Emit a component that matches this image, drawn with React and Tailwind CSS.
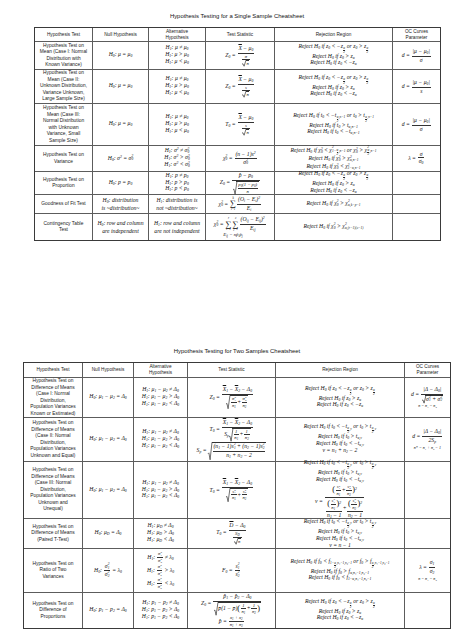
import React from "react";

const Sb = ({ children }) => (
  <span className="align-[-0.3em] text-[0.66em] leading-none">{children}</span>
);
const Sp = ({ children }) => (
  <span className="align-[0.55em] text-[0.66em] leading-none">{children}</span>
);
const SS = ({ sup, sub, t }) => (
  <span
    className={
      (t ? "leading-[0.85] " : "leading-[0.98] ") +
      "inline-flex flex-col items-start align-middle text-[0.62em] ml-[0.2px]"
    }
  >
    <span>{sup}</span>
    <span className="whitespace-nowrap">{sub}</span>
  </span>
);
const Q = () => (
  <span className="inline-flex flex-col items-center align-[0.15em] leading-[0.86] mx-[0.3px]">
    <span>α</span>
    <span className="self-stretch text-center border-t border-[#333]">2</span>
  </span>
);
const Sf = ({ children }) => (
  <span className="text-[0.6em] align-[-0.45em] leading-none whitespace-nowrap">{children}</span>
);
function F({ n, d, sm, c = "" }) {
  return (
    <span
      className={
        (sm ? "text-[0.82em] " : "") +
        "inline-flex flex-col items-center align-middle mx-[0.6px] leading-[1.12] " +
        c
      }
    >
      <span className="px-[0.8px] whitespace-nowrap">{n}</span>
      <span className="self-stretch text-center border-t border-[#333] px-[0.8px] whitespace-nowrap">
        {d}
      </span>
    </span>
  );
}
const R = ({ children }) => (
  <span className="relative inline-flex items-center align-middle pl-[3.6px]">
    <svg
      className="absolute left-0 top-0 h-full w-[4px] overflow-visible"
      viewBox="0 0 4 10"
      preserveAspectRatio="none"
    >
      <path
        d="M0 6.6 L0.9 6.1 L2.1 10 L4 0.1"
        fill="none"
        stroke="#333"
        strokeWidth="0.7"
        vectorEffect="non-scaling-stroke"
      />
    </svg>
    <span className="border-t border-[#333] px-[0.5px] whitespace-nowrap">{children}</span>
  </span>
);
const Sum = ({ top, bot }) => (
  <span className="inline-flex flex-col items-center align-middle leading-[1] mx-[0.5px]">
    <span className="text-[0.55em]">{top}</span>
    <span className="text-[1.5em] not-italic leading-[0.9]">∑</span>
    <span className="text-[0.55em]">{bot}</span>
  </span>
);
const P = ({ children }) => (
  <span className="text-[1.45em] leading-none not-italic align-middle">{children}</span>
);
const L = ({ items, c = "" }) => (
  <div className={"flex flex-col items-center " + c}>
    {items.map((x, i) => (
      <div key={i} className="whitespace-nowrap">
        {x}
      </div>
    ))}
  </div>
);

const Hd = ({ children }) => (
  <div className="bg-white flex flex-col items-center justify-center text-center overflow-hidden [font-family:'Liberation_Sans',Arial,sans-serif] text-[4.7px] leading-[5.9px] text-[#222]">
    <div>{children}</div>
  </div>
);
const Tx = ({ children }) => (
  <div className="bg-white flex flex-col items-center justify-center text-center overflow-hidden [font-family:'Liberation_Sans',Arial,sans-serif] text-[4.85px] leading-[6.5px] text-[#222]">
    <div>{children}</div>
  </div>
);
const Mx = ({ children, c = "" }) => (
  <div
    className={
      "bg-white flex flex-col items-center justify-center text-center [font-family:'Liberation_Serif','DejaVu_Serif',serif] italic text-[5.7px] leading-[5.6px] text-[#111] " +
      c
    }
  >
    <div className="flex flex-col items-center">{children}</div>
  </div>
);

const H0 = () => (
  <>
    H<Sb>0</Sb>:{" "}
  </>
);
const H1 = () => (
  <>
    H<Sb>1</Sb>:{" "}
  </>
);
const Xb = () => <span className="overline">X</span>;
const ph = "p\u0302";
const Chi0 = ({ t }) => (
  <>
    χ<SS t={t} sup="2" sub="0" />
  </>
);
const Rj = () => (
  <>
    Reject H<Sb>0</Sb> if{" "}
  </>
);

const zRR = () => (
  <L
    items={[
      <>
        <Rj />z<Sb>0</Sb> &lt; −z
        <Sf>
          <Q />
        </Sf>{" "}
        or z<Sb>0</Sb> &gt; z
        <Sf>
          <Q />
        </Sf>
      </>,
      <>
        <Rj />z<Sb>0</Sb> &gt; z<Sb>α</Sb>
      </>,
      <>
        <Rj />z<Sb>0</Sb> &lt; −z<Sb>α</Sb>
      </>,
    ]}
  />
);

const muNull = () => (
  <div className="whitespace-nowrap">
    <H0 />μ = μ<Sb>0</Sb>
  </div>
);
const muAlt = () => (
  <L
    items={[
      <>
        <H1 />μ ≠ μ<Sb>0</Sb>
      </>,
      <>
        <H1 />μ &gt; μ<Sb>0</Sb>
      </>,
      <>
        <H1 />μ &lt; μ<Sb>0</Sb>
      </>,
    ]}
  />
);

const s1 = () => (
  <>
    s<SS sup="2" sub="1" />
  </>
);
const s2 = () => (
  <>
    s<SS sup="2" sub="2" />
  </>
);
const sg1 = () => (
  <>
    σ<SS sup="2" sub="1" />
  </>
);
const sg2 = () => (
  <>
    σ<SS sup="2" sub="2" />
  </>
);
const n1 = () => (
  <>
    n<Sb>1</Sb>
  </>
);
const n2 = () => (
  <>
    n<Sb>2</Sb>
  </>
);
const X12 = () => (
  <>
    <Xb />
    <Sb>1</Sb> − <Xb />
    <Sb>2</Sb> − Δ<Sb>0</Sb>
  </>
);

const diffAlt = (a, b) => (
  <L
    items={[
      <>
        <H1 />
        {a} ≠ {b}
      </>,
      <>
        <H1 />
        {a} &gt; {b}
      </>,
      <>
        <H1 />
        {a} &lt; {b}
      </>,
    ]}
  />
);

const tvRR = (extra) => (
  <L
    items={[
      <>
        <Rj />t<Sb>0</Sb> &lt; −t
        <Sf>
          <Q />
          ,v
        </Sf>{" "}
        or t<Sb>0</Sb> &gt; t
        <Sf>
          <Q />
          ,v
        </Sf>
      </>,
      <>
        <Rj />t<Sb>0</Sb> &gt; t<Sb>α,v</Sb>
      </>,
      <>
        <Rj />t<Sb>0</Sb> &lt; −t<Sb>α,v</Sb>
      </>,
      extra,
    ]}
  />
);

function TopTable() {
  return (
    <div className="ml-[34px] w-fit grid grid-cols-[57px_55px_56px_68px_117px_47px] grid-rows-[13px_27px_33px_41px_25px_22px_18px_26px] gap-px bg-[#5c5c5c] border border-[#3a3a3a]">
      <Hd>Hypothesis Test</Hd>
      <Hd>Null Hypothesis</Hd>
      <Hd>
        Alternative
        <br />
        Hypothesis
      </Hd>
      <Hd>Test Statistic</Hd>
      <Hd>Rejection Region</Hd>
      <Hd>
        OC Curves
        <br />
        Parameter
      </Hd>

      {/* row 1 */}
      <Tx>
        Hypothesis Test on
        <br />
        Mean (Case I: Normal
        <br />
        Distribution with
        <br />
        Known Variance)
      </Tx>
      <Mx>{muNull()}</Mx>
      <Mx c="leading-[5.1px]">{muAlt()}</Mx>
      <Mx>
        <div className="whitespace-nowrap">
          Z<Sb>0</Sb> ={" "}
          <F
            n={
              <>
                <Xb /> − μ<Sb>0</Sb>
              </>
            }
            d={<F sm n="σ" d={<R>n</R>} />}
          />
        </div>
      </Mx>
      <Mx c="text-[5.4px] leading-[5px]">{zRR()}</Mx>
      <Mx>
        <div className="whitespace-nowrap">
          d ={" "}
          <F
            n={
              <>
                |μ − μ<Sb>0</Sb>|
              </>
            }
            d="σ"
          />
        </div>
      </Mx>

      {/* row 2 */}
      <Tx>
        Hypothesis Test on
        <br />
        Mean (Case II:
        <br />
        Unknown Distribution,
        <br />
        Variance Unknown,
        <br />
        Large Sample Size)
      </Tx>
      <Mx>{muNull()}</Mx>
      <Mx c="leading-[5.1px]">{muAlt()}</Mx>
      <Mx>
        <div className="whitespace-nowrap">
          Z<Sb>0</Sb> ={" "}
          <F
            n={
              <>
                <Xb /> − μ<Sb>0</Sb>
              </>
            }
            d={<F sm n="s" d={<R>n</R>} />}
          />
        </div>
      </Mx>
      <Mx c="text-[5.4px] leading-[5px]">{zRR()}</Mx>
      <Mx>
        <div className="whitespace-nowrap">
          d ={" "}
          <F
            n={
              <>
                |μ − μ<Sb>0</Sb>|
              </>
            }
            d="s"
          />
        </div>
      </Mx>

      {/* row 3 */}
      <Tx>
        Hypothesis Test on
        <br />
        Mean (Case III:
        <br />
        Normal Distribution
        <br />
        with Unknown
        <br />
        Variance, Small
        <br />
        Sample Size)
      </Tx>
      <Mx>{muNull()}</Mx>
      <Mx c="leading-[5.1px]">{muAlt()}</Mx>
      <Mx>
        <div className="whitespace-nowrap">
          T<Sb>0</Sb> ={" "}
          <F
            n={
              <>
                <Xb /> − μ<Sb>0</Sb>
              </>
            }
            d={<F sm n="s" d={<R>n</R>} />}
          />
        </div>
      </Mx>
      <Mx c="text-[5.4px] leading-[5px]">
        <L
          items={[
            <>
              <Rj />t<Sb>0</Sb> &lt; −t
              <Sf>
                <Q />
                ,n−1
              </Sf>{" "}
              or t<Sb>0</Sb> &gt; t
              <Sf>
                <Q />
                ,n−1
              </Sf>
            </>,
            <>
              <Rj />t<Sb>0</Sb> &gt; t<Sb>α,n−1</Sb>
            </>,
            <>
              <Rj />t<Sb>0</Sb> &lt; −t<Sb>α,n−1</Sb>
            </>,
          ]}
        />
      </Mx>
      <Mx>
        <div className="whitespace-nowrap">
          d ={" "}
          <F
            n={
              <>
                |μ − μ<Sb>0</Sb>|
              </>
            }
            d="σ"
          />
        </div>
      </Mx>

      {/* row 4 */}
      <Tx>
        Hypothesis Test on
        <br />
        Variance
      </Tx>
      <Mx>
        <div className="whitespace-nowrap">
          <H0 />σ<Sp>2</Sp> = σ<SS sup="2" sub="0" />
        </div>
      </Mx>
      <Mx c="text-[5.2px] leading-[5px]">
        <L
          items={[
            <>
              <H1 />σ<Sp>2</Sp> ≠ σ<SS t sup="2" sub="0" />
            </>,
            <>
              <H1 />σ<Sp>2</Sp> &gt; σ<SS t sup="2" sub="0" />
            </>,
            <>
              <H1 />σ<Sp>2</Sp> &lt; σ<SS t sup="2" sub="0" />
            </>,
          ]}
        />
      </Mx>
      <Mx>
        <div className="whitespace-nowrap">
          <Chi0 /> ={" "}
          <F
            n={
              <>
                (n − 1)s<Sp>2</Sp>
              </>
            }
            d={
              <>
                σ<SS sup="2" sub="0" />
              </>
            }
          />
        </div>
      </Mx>
      <Mx c="text-[4.8px] leading-[3.6px]">
        <L
          items={[
            <>
              <Rj />
              <Chi0 t /> &lt; χ
              <SS
                t
                sup="2"
                sub={
                  <>
                    1−
                    <Q />
                    ,n−1
                  </>
                }
              />{" "}
              or <Chi0 t /> &gt; χ
              <SS
                t
                sup="2"
                sub={
                  <>
                    <Q />
                    ,n−1
                  </>
                }
              />
            </>,
            <>
              <Rj />
              <Chi0 t /> &gt; χ<SS t sup="2" sub="α,n−1" />
            </>,
            <>
              <Rj />
              <Chi0 t /> &lt; χ<SS t sup="2" sub="1−α,n−1" />
            </>,
          ]}
        />
      </Mx>
      <Mx>
        <div className="whitespace-nowrap">
          λ ={" "}
          <F
            n="σ"
            d={
              <>
                σ<Sb>0</Sb>
              </>
            }
          />
        </div>
      </Mx>

      {/* row 5 */}
      <Tx>
        Hypothesis Test on
        <br />
        Proportion
      </Tx>
      <Mx>
        <div className="whitespace-nowrap">
          <H0 />p = p<Sb>0</Sb>
        </div>
      </Mx>
      <Mx c="leading-[5.1px]">
        <L
          items={[
            <>
              <H1 />p ≠ p<Sb>0</Sb>
            </>,
            <>
              <H1 />p &gt; p<Sb>0</Sb>
            </>,
            <>
              <H1 />p &lt; p<Sb>0</Sb>
            </>,
          ]}
        />
      </Mx>
      <Mx c="text-[5.3px]">
        <div className="whitespace-nowrap">
          Z<Sb>0</Sb> ={" "}
          <F
            n={
              <>
                {ph} − p<Sb>0</Sb>
              </>
            }
            d={
              <R>
                <F
                  sm
                  n={
                    <>
                      p<Sb>0</Sb>(1 − p<Sb>0</Sb>)
                    </>
                  }
                  d="n"
                />
              </R>
            }
          />
        </div>
      </Mx>
      <Mx c="text-[5.3px] leading-[4.6px]">{zRR()}</Mx>
      <Mx> </Mx>

      {/* row 6 */}
      <Tx>Goodness of Fit Test</Tx>
      <Mx c="leading-[6.2px] text-[5.4px]">
        <div>
          <H0 />distribution
          <br />
          is ~distribution~
        </div>
      </Mx>
      <Mx c="leading-[6.2px] text-[5.4px]">
        <div>
          <H1 />distribution is
          <br />
          not ~distribution~
        </div>
      </Mx>
      <Mx c="text-[5.3px]">
        <div className="whitespace-nowrap">
          <Chi0 /> = <Sum top="k" bot="i=1" />
          <F
            n={
              <>
                (O<Sb>i</Sb> − E<Sb>i</Sb>)<Sp>2</Sp>
              </>
            }
            d={
              <>
                E<Sb>i</Sb>
              </>
            }
          />
        </div>
      </Mx>
      <Mx c="text-[5.4px]">
        <div className="whitespace-nowrap">
          <Rj />
          <Chi0 /> &gt; χ<SS sup="2" sub="α,k−p−1" />
        </div>
      </Mx>
      <Mx> </Mx>

      {/* row 7 */}
      <Tx>
        Contingency Table
        <br />
        Test
      </Tx>
      <Mx c="leading-[6.2px] text-[5.4px]">
        <div>
          <H0 />row and column
          <br />
          are independent
        </div>
      </Mx>
      <Mx c="leading-[6.2px] text-[5.4px]">
        <div>
          <H1 />row and column
          <br />
          are not independent
        </div>
      </Mx>
      <Mx c="text-[5.3px]">
        <div className="whitespace-nowrap">
          <Chi0 /> = <Sum top="r" bot="i=1" />
          <Sum top="c" bot="j=1" />
          <F
            n={
              <>
                (O<Sb>ij</Sb> − E<Sb>ij</Sb>)<Sp>2</Sp>
              </>
            }
            d={
              <>
                E<Sb>ij</Sb>
              </>
            }
          />
        </div>
        <div className="whitespace-nowrap -mt-[1px] text-[0.85em] pr-[14px]">
          E<Sb>ij</Sb> = n{ph}
          <Sb>i</Sb>
          {ph}
          <Sb>j</Sb>
        </div>
      </Mx>
      <Mx c="text-[5.4px]">
        <div className="whitespace-nowrap">
          <Rj />
          <Chi0 /> &gt; χ<SS sup="2" sub="α,(r−1)(c−1)" />
        </div>
      </Mx>
      <Mx> </Mx>
    </div>
  );
}

function BottomTable() {
  const mdNull = (
    <div className="whitespace-nowrap">
      <H0 />μ<Sb>1</Sb> − μ<Sb>2</Sb> = Δ<Sb>0</Sb>
    </div>
  );
  const md = (
    <>
      μ<Sb>1</Sb> − μ<Sb>2</Sb>
    </>
  );
  const d0 = (
    <>
      Δ<Sb>0</Sb>
    </>
  );
  const rat = <F n={sg1()} d={sg2()} />;
  const ratSm = <F sm n={sg1()} d={sg2()} />;
  return (
    <div className="ml-[23px] w-fit grid grid-cols-[58px_50px_53px_87px_128px_45px] grid-rows-[14px_39px_43px_56px_29px_43px_35px] gap-px bg-[#5c5c5c] border border-[#3a3a3a]">
      <Hd>Hypothesis Test</Hd>
      <Hd>Null Hypothesis</Hd>
      <Hd>
        Alternative
        <br />
        Hypothesis
      </Hd>
      <Hd>Test Statistic</Hd>
      <Hd>Rejection Region</Hd>
      <Hd>
        OC Curves
        <br />
        Parameter
      </Hd>

      {/* row 1 */}
      <Tx>
        Hypothesis Test on
        <br />
        Difference of Means
        <br />
        (Case I: Normal
        <br />
        Distribution,
        <br />
        Population Variances
        <br />
        Known or Estimated)
      </Tx>
      <Mx c="text-[5.3px]">{mdNull}</Mx>
      <Mx c="text-[5.3px] leading-[5.1px]">{diffAlt(md, d0)}</Mx>
      <Mx c="text-[5.6px]">
        <div className="whitespace-nowrap">
          Z<Sb>0</Sb> ={" "}
          <F
            n={<X12 />}
            d={
              <R>
                <F sm n={sg1()} d={n1()} />+<F sm n={sg2()} d={n2()} />
              </R>
            }
          />
        </div>
      </Mx>
      <Mx c="text-[5.4px] leading-[5px]">{zRR()}</Mx>
      <Mx c="text-[5.4px]">
        <div className="whitespace-nowrap">
          d ={" "}
          <F
            n={
              <>
                |Δ − Δ<Sb>0</Sb>|
              </>
            }
            d={
              <R>
                {sg1()} + {sg2()}
              </R>
            }
          />
        </div>
        <div className="whitespace-nowrap text-[0.72em]">
          n = n<Sb>1</Sb> = n<Sb>2</Sb>
        </div>
      </Mx>

      {/* row 2 */}
      <Tx>
        Hypothesis Test on
        <br />
        Difference of Means
        <br />
        (Case II: Normal
        <br />
        Distribution,
        <br />
        Population Variances
        <br />
        Unknown and Equal)
      </Tx>
      <Mx c="text-[5.3px]">{mdNull}</Mx>
      <Mx c="text-[5.3px] leading-[5.1px]">{diffAlt(md, d0)}</Mx>
      <Mx c="text-[5.3px]">
        <div className="whitespace-nowrap mb-[1px]">
          T<Sb>0</Sb> ={" "}
          <F
            n={<X12 />}
            d={
              <>
                S<Sb>p</Sb>
                <R>
                  <F sm n="1" d={n1()} />+<F sm n="1" d={n2()} />
                </R>
              </>
            }
          />
        </div>
        <div className="whitespace-nowrap">
          S<Sb>p</Sb> ={" "}
          <R>
            <F
              n={
                <>
                  (n<Sb>1</Sb> − 1){s1()} + (n<Sb>2</Sb> − 1){s2()}
                </>
              }
              d={
                <>
                  n<Sb>1</Sb> + n<Sb>2</Sb> − 2
                </>
              }
            />
          </R>
        </div>
      </Mx>
      <Mx c="text-[5.4px] leading-[5px]">
        {tvRR(
          <>
            v = n<Sb>1</Sb> + n<Sb>2</Sb> − 2
          </>
        )}
      </Mx>
      <Mx c="text-[5.4px]">
        <div className="whitespace-nowrap">
          d ={" "}
          <F
            n={
              <>
                |Δ − Δ<Sb>0</Sb>|
              </>
            }
            d={
              <>
                2S<Sb>p</Sb>
              </>
            }
          />
        </div>
        <div className="whitespace-nowrap text-[0.72em]">
          n* = n<Sb>1</Sb> + n<Sb>2</Sb> − 1
        </div>
      </Mx>

      {/* row 3 */}
      <Tx>
        Hypothesis Test on
        <br />
        Difference of Means
        <br />
        (Case III: Normal
        <br />
        Distribution,
        <br />
        Population Variances
        <br />
        Unknown and
        <br />
        Unequal)
      </Tx>
      <Mx c="text-[5.3px]">{mdNull}</Mx>
      <Mx c="text-[5.3px] leading-[5.1px]">{diffAlt(md, d0)}</Mx>
      <Mx c="text-[5.6px]">
        <div className="whitespace-nowrap">
          T<Sb>0</Sb> ={" "}
          <F
            n={<X12 />}
            d={
              <R>
                <F sm n={s1()} d={n1()} />+<F sm n={s2()} d={n2()} />
              </R>
            }
          />
        </div>
      </Mx>
      <Mx c="text-[5.2px] leading-[4.8px]">
        {tvRR(
          <div className="whitespace-nowrap pt-[0.5px]">
            v ={" "}
            <F
              n={
                <>
                  <P>(</P>
                  <F sm n={s1()} d={n1()} />+<F sm n={s2()} d={n2()} />
                  <P>)</P>
                  <Sp>2</Sp>
                </>
              }
              d={
                <>
                  <F
                    n={
                      <>
                        <P>(</P>
                        <F sm n={s1()} d={n1()} />
                        <P>)</P>
                        <Sp>2</Sp>
                      </>
                    }
                    d={
                      <>
                        n<Sb>1</Sb> − 1
                      </>
                    }
                  />
                  +
                  <F
                    n={
                      <>
                        <P>(</P>
                        <F sm n={s2()} d={n2()} />
                        <P>)</P>
                        <Sp>2</Sp>
                      </>
                    }
                    d={
                      <>
                        n<Sb>2</Sb> − 1
                      </>
                    }
                  />
                </>
              }
            />
          </div>
        )}
      </Mx>
      <Mx> </Mx>

      {/* row 4 */}
      <Tx>
        Hypothesis Test on
        <br />
        Difference of Means
        <br />
        (Paired T-Test)
      </Tx>
      <Mx c="text-[5.3px]">
        <div className="whitespace-nowrap">
          <H0 />μ<Sb>D</Sb> = Δ<Sb>0</Sb>
        </div>
      </Mx>
      <Mx c="text-[5.3px] leading-[5.1px]">
        {diffAlt(
          <>
            μ<Sb>D</Sb>
          </>,
          d0
        )}
      </Mx>
      <Mx c="text-[5.6px]">
        <div className="whitespace-nowrap">
          T<Sb>0</Sb> ={" "}
          <F
            n={
              <>
                <span className="overline">D</span> − Δ<Sb>0</Sb>
              </>
            }
            d={
              <F
                sm
                n={
                  <>
                    S<Sb>D</Sb>
                  </>
                }
                d={<R>n</R>}
              />
            }
          />
        </div>
      </Mx>
      <Mx c="text-[5.2px] leading-[4.7px]">{tvRR(<>v = n − 1</>)}</Mx>
      <Mx> </Mx>

      {/* row 5 */}
      <Tx>
        Hypothesis Test on
        <br />
        Ratio of Two
        <br />
        Variances
      </Tx>
      <Mx c="text-[5.3px]">
        <div className="whitespace-nowrap">
          <H0 />
          {rat} = λ<Sb>0</Sb>
        </div>
      </Mx>
      <Mx c="text-[5.3px]">
        <L
          c="gap-[0.5px]"
          items={[
            <>
              <H1 />
              {ratSm} ≠ λ<Sb>0</Sb>
            </>,
            <>
              <H1 />
              {ratSm} &gt; λ<Sb>0</Sb>
            </>,
            <>
              <H1 />
              {ratSm} &lt; λ<Sb>0</Sb>
            </>,
          ]}
        />
      </Mx>
      <Mx>
        <div className="whitespace-nowrap">
          F<Sb>0</Sb> = <F n={s1()} d={s2()} />
        </div>
      </Mx>
      <Mx c="text-[5.2px] leading-[5.2px]">
        <L
          items={[
            <>
              <Rj />f<Sb>0</Sb> &lt; f
              <Sf>
                1−
                <Q />
                ,n₁−1,n₂−1
              </Sf>{" "}
              or f<Sb>0</Sb> &gt; f
              <Sf>
                <Q />
                ,n₁−1,n₂−1
              </Sf>
            </>,
            <>
              <Rj />f<Sb>0</Sb> &gt; f<Sb>α,n₁−1,n₂−1</Sb>
            </>,
            <>
              <Rj />f<Sb>0</Sb> &lt; f<Sb>1−α,n₁−1,n₂−1</Sb>
            </>,
          ]}
        />
      </Mx>
      <Mx c="text-[5.4px]">
        <div className="whitespace-nowrap">
          λ ={" "}
          <F
            n={
              <>
                σ<Sb>1</Sb>
              </>
            }
            d={
              <>
                σ<Sb>2</Sb>
              </>
            }
          />
        </div>
        <div className="whitespace-nowrap text-[0.72em]">
          n = n<Sb>1</Sb> = n<Sb>2</Sb>
        </div>
      </Mx>

      {/* row 6 */}
      <Tx>
        Hypothesis Test on
        <br />
        Difference of
        <br />
        Proportions
      </Tx>
      <Mx c="text-[5.3px]">
        <div className="whitespace-nowrap">
          <H0 />p<Sb>1</Sb> − p<Sb>2</Sb> = Δ<Sb>0</Sb>
        </div>
      </Mx>
      <Mx c="text-[5.3px] leading-[5.1px]">
        {diffAlt(
          <>
            p<Sb>1</Sb> − p<Sb>2</Sb>
          </>,
          d0
        )}
      </Mx>
      <Mx c="text-[5.3px]">
        <div className="whitespace-nowrap">
          Z<Sb>0</Sb> ={" "}
          <F
            n={
              <>
                {ph}
                <Sb>1</Sb> − {ph}
                <Sb>2</Sb> − Δ<Sb>0</Sb>
              </>
            }
            d={
              <R>
                {ph}(1 − {ph})<P>(</P>
                <F sm n="1" d={n1()} />+<F sm n="1" d={n2()} />
                <P>)</P>
              </R>
            }
          />
        </div>
        <div className="whitespace-nowrap">
          {ph} ={" "}
          <F
            sm
            n={
              <>
                x<Sb>1</Sb> + x<Sb>2</Sb>
              </>
            }
            d={
              <>
                n<Sb>1</Sb> + n<Sb>2</Sb>
              </>
            }
          />
        </div>
      </Mx>
      <Mx c="text-[5.4px] leading-[5px]">{zRR()}</Mx>
      <Mx> </Mx>
    </div>
  );
}

export default function App() {
  return (
    <div className="w-[474px] h-[632px] bg-white overflow-hidden">
      <div className="h-[27px] flex items-end justify-center pb-[8px] [font-family:'Liberation_Sans',Arial,sans-serif] text-[5.9px] leading-[6px] text-[#111]">
        Hypothesis Testing for a Single Sample Cheatsheet
      </div>
      <TopTable />
      <div className="h-[121px] flex items-end justify-center pb-[8px] [font-family:'Liberation_Sans',Arial,sans-serif] text-[5.9px] leading-[6px] text-[#111]">
        Hypothesis Testing for Two Samples Cheatsheet
      </div>
      <BottomTable />
    </div>
  );
}
